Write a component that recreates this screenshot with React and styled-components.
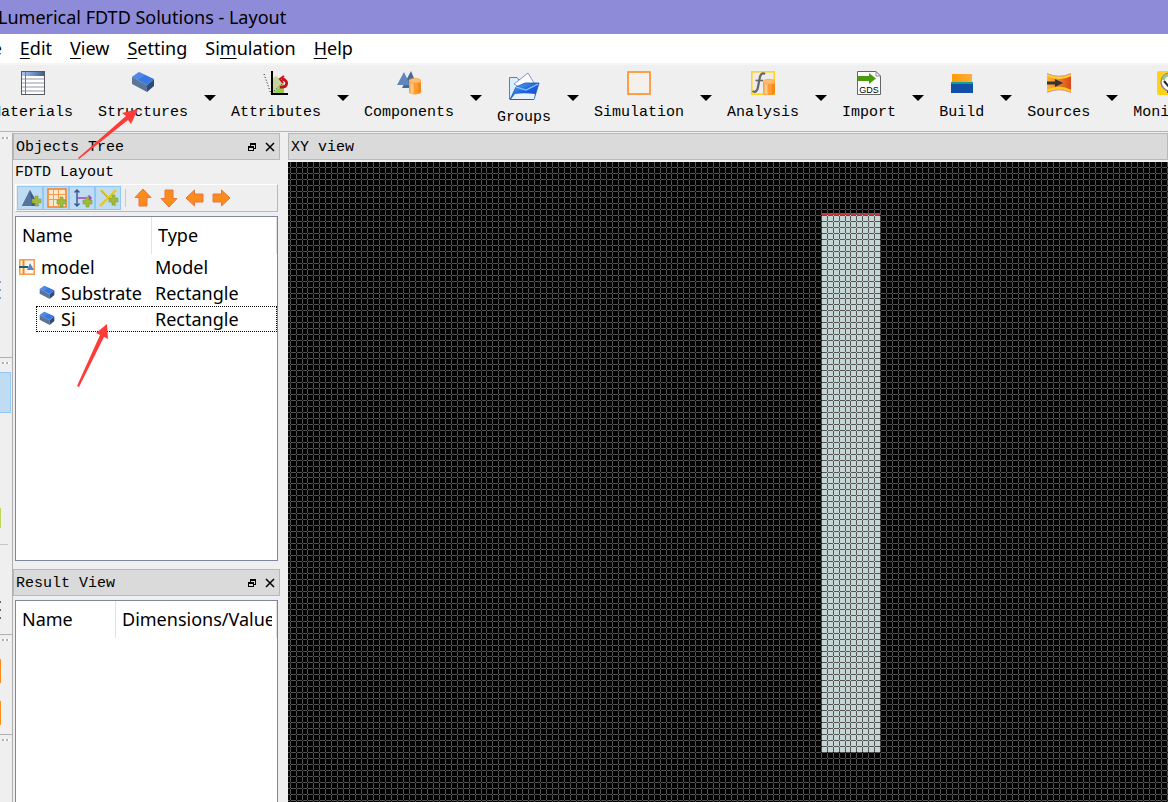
import React from 'react';
import styled, { createGlobalStyle } from 'styled-components';

const GRID_STEP = 5.967;

const gridPath = () => {
  const parts = [];
  for (let i = 0; i < 460; i += 1) {
    parts.push(`M${Math.round(1.58 + i * GRID_STEP)} 0v1600h1v-1600z`);
  }
  for (let i = 0; i < 270; i += 1) {
    parts.push(`M0 ${Math.round(5.2 + i * GRID_STEP)}h2740v1h-2740z`);
  }
  return parts.join('');
};

const GRID = gridPath();

/* icons */

const MaterialsIcon = () => (
  <svg width='24' height='24' viewBox='0 0 24 24' shapeRendering='crispEdges'>
    <defs>
      <linearGradient id='matHead'>
        <stop offset='0' stopColor='#a9c4f5' />
        <stop offset='1' stopColor='#3f5f92' />
      </linearGradient>
    </defs>
    <rect x='0.5' y='0.5' width='23' height='23' fill='#fff' stroke='#575860' />
    <rect x='1' y='1' width='22' height='4' fill='url(#matHead)' />
    <path d='M1 7h22v2H1zM1 11h22v2H1zM1 15h22v2H1zM1 19h22v2H1z' fill='#c8cbd0' />
    <path d='M4 1h1v22H4z' fill='#777b85' />
  </svg>
);

const BlockIcon = ({ size = 24 }) => (
  <svg width={size} height={size} viewBox='0 0 24 24'>
    <path d='M1 6L16 14V21L1 13z' fill='#5b7598' />
    <path d='M16 14L23 8V15L16 21z' fill='#2f4a75' />
    <path d='M1 6L8 1L23 8L16 14z' fill='#3977e2' />
    <path d='M1 6L8 1L14 4L7 9z' fill='#6b9bed' opacity='0.5' />
  </svg>
);

const AttributesIcon = () => (
  <svg width='26' height='24' viewBox='0 0 26 24'>
    <path d='M9 8L13 5L19 10L22 15L12 22H9z' fill='#c2d69b' />
    <path d='M11 22L21 12V22z' fill='#8fd14b' />
    <path d='M1 3L8 23M9 22L20 12' stroke='#111' strokeWidth='1' strokeDasharray='1 2' />
    <path d='M9 0V23H25' fill='none' stroke='#000' strokeWidth='2' />
    <path d='M19 8C26 9 25 17 17 16' fill='none' stroke='#c90e18' strokeWidth='2.8' />
    <path d='M21 5L17 8L20 12' fill='none' stroke='#c90e18' strokeWidth='2' />
  </svg>
);

const Cylinder = ({ x, y }) => (
  <g transform={`translate(${x} ${y})`}>
    <path d='M0 2.5V14C0 17.3 12 17.3 12 14V2.5z' fill='#ff9c32' />
    <path d='M1.5 4V15L4.5 16V5z' fill='#ffc98a' />
    <path d='M9 5H12V14L9 15.7z' fill='#f58a1a' />
    <ellipse cx='6' cy='2.7' rx='6' ry='2.4' fill='#ffbb70' stroke='#f39a3d' strokeWidth='0.6' />
  </g>
);

const ComponentsIcon = () => (
  <svg width='24' height='24' viewBox='0 0 24 24'>
    <path d='M14 0L21 17H5z' fill='#486a9a' />
    <path d='M7 1L13 14H0z' fill='#5f86bd' />
    <Cylinder x={12} y={7} />
  </svg>
);

const GroupsIcon = () => (
  <svg width='32' height='29' viewBox='0 0 32 29'>
    <defs>
      <linearGradient id='folder' x1='0' y1='0' x2='1' y2='1'>
        <stop offset='0' stopColor='#6fb6f2' />
        <stop offset='0.5' stopColor='#1f63dc' />
        <stop offset='1' stopColor='#1546b8' />
      </linearGradient>
    </defs>
    <path d='M1.5 6.5H9L11 9H23V28H1.5z' fill='#d9f1ff' stroke='#3b86d8' />
    <path d='M6 13L20 2L26 12L18 20z' fill='#fbfcff' stroke='#707cb5' strokeWidth='0.8' />
    <path d='M8 16L17 12H31L26 28.5H2z' fill='url(#folder)' stroke='#1853c0' strokeWidth='0.8' />
    <path d='M7 23C13 22 20 22 27 23L26 28H3z' fill='#e9f2ff' />
    <path d='M8 16L18 19L30 13' fill='none' stroke='#8cc9ff' strokeWidth='1.2' />
  </svg>
);

const SimulationIcon = () => (
  <svg width='24' height='24' viewBox='0 0 24 24'>
    <rect x='1' y='1' width='22' height='22' fill='#f4f0ec' stroke='#ff8d20' strokeWidth='1.6' />
  </svg>
);

const AnalysisIcon = () => (
  <svg width='24' height='24' viewBox='0 0 24 24'>
    <rect x='0.8' y='0.8' width='22.4' height='22.4' fill='#ececec' stroke='#ffd51c' strokeWidth='1.6' />
    <path d='M14 3C11 1 9 4 8.5 8L7 16C6.5 20 4 22 1.5 20' fill='none' stroke='#666' strokeWidth='2.2' />
    <path d='M4.5 9.5H12' stroke='#666' strokeWidth='1.6' />
    <Cylinder x={12} y={8} />
  </svg>
);

const ImportIcon = () => (
  <svg width='24' height='24' viewBox='0 0 24 24'>
    <path d='M0.5 0.5H19L23.5 5V23.5H0.5z' fill='#fff' stroke='#666' />
    <path d='M19 0.5V5H23.5' fill='none' stroke='#888' />
    <path d='M1 5H12V2L19 7.5L12 13V10H1z' fill='#4a9a0c' />
    <text x='12' y='22' textAnchor='middle' fontFamily='Liberation Sans, sans-serif' fontSize='9' fill='#000'>GDS</text>
  </svg>
);

const BuildIcon = () => (
  <svg width='24' height='24' viewBox='0 0 24 24' shapeRendering='crispEdges'>
    <defs>
      <linearGradient id='sun'>
        <stop offset='0' stopColor='#ff9c06' />
        <stop offset='1' stopColor='#ffac3c' />
      </linearGradient>
    </defs>
    <path d='M2 3H22V11H2z' fill='url(#sun)' />
    <path d='M1 11H23V13H1z' fill='#12a08c' />
    <path d='M1 13H23V22H1z' fill='#1250a5' />
  </svg>
);

const SourcesIcon = () => (
  <svg width='24' height='24' viewBox='0 0 24 24'>
    <defs>
      <linearGradient id='beam'>
        <stop offset='0' stopColor='#ffb23a' />
        <stop offset='1' stopColor='#d8481b' />
      </linearGradient>
    </defs>
    <path d='M0 3Q12 9 24 3V21Q12 15 0 21z' fill='url(#beam)' />
    <path d='M0 4Q12 10 24 4M0 20Q12 14 24 20' fill='none' stroke='#ffd11c' strokeWidth='2.4' />
    <path d='M0 2.5Q12 8 24 2.5M0 21.5Q12 16 24 21.5' fill='none' stroke='#dd7777' strokeWidth='0.8' />
    <path d='M0 10.500H8V8L16 12L8 16V13.5H0z' fill='#333' />
  </svg>
);

const MonitorsIcon = () => (
  <svg width='24' height='24' viewBox='0 0 24 24'>
    <rect width='24' height='24' rx='2' fill='#ffd21a' />
    <circle cx='13' cy='11' r='9' fill='#fff' stroke='#8a7ba8' strokeWidth='1.4' />
    <path d='M6 9Q8 3 14 4' fill='none' stroke='#9ac77f' strokeWidth='3' />
    <path d='M7 10L12 16' stroke='#222' strokeWidth='2' />
    <path d='M10 21H14' stroke='#555' strokeWidth='2' />
  </svg>
);

const CaretIcon = () => (
  <svg width='12' height='6' viewBox='0 0 12 6'>
    <path d='M0 0H12L6 6z' fill='#000' />
  </svg>
);

const Plus = () => (
  <path d='M11 11H14V8H17V11H20V15H17V18H14V15H11z' fill='#9fba3c' stroke='#829f38' strokeWidth='0.6' />
);

const AddStructureIcon = () => (
  <svg width='21' height='20' viewBox='0 0 21 20'>
    <path d='M9 2L18 18H1z' fill='#3f5b86' />
    <path d='M9 2L11 18H1z' fill='#55749f' />
    <Plus />
  </svg>
);

const AddGridIcon = () => (
  <svg width='21' height='20' viewBox='0 0 21 20'>
    <rect x='1' y='1' width='18' height='18' fill='#fde9cf' stroke='#f7862a' strokeWidth='1.6' />
    <path d='M6.5 1V19M11.5 1V19M1 6.5H19M1 11.5H19' stroke='#f9994a' />
    <g transform='translate(-1 1)'><Plus /></g>
  </svg>
);

const AddAxisIcon = () => (
  <svg width='21' height='20' viewBox='0 0 21 20'>
    <path d='M4 2V18M1.500 4.5L4 2L6.5 4.5M1.5 15.5L4 18L6.5 15.5' fill='none' stroke='#3c5a92' strokeWidth='1.5' />
    <path d='M4 10H18M15.5 7.5L18 10L15.5 12.5' fill='none' stroke='#a63bd0' strokeWidth='1.5' />
    <g transform='translate(-1 1)'><Plus /></g>
  </svg>
);

const AddCrossIcon = () => (
  <svg width='21' height='20' viewBox='0 0 21 20'>
    <path d='M2 2L17 18M17 2L1 18' stroke='#e8c81c' strokeWidth='2.2' />
    <path d='M2 3L8 9' stroke='#b9962c' strokeWidth='0.8' />
    <g transform='translate(-1 -1)'><Plus /></g>
  </svg>
);

const ArrowIcon = ({ turn }) => (
  <svg width='20' height='20' viewBox='0 0 20 20'>
    <path
      d='M10 1L18 9.5H14V18H6V9.5H2z'
      fill='#f98c1d'
      stroke='#ee7440'
      strokeLinejoin='round'
      transform={`rotate(${turn} 10 10)`}
    />
  </svg>
);

const ModelIcon = () => (
  <svg width='16' height='16' viewBox='0 0 16 16'>
    <rect x='0.8' y='0.8' width='14.4' height='14.4' fill='#fff8ef' stroke='#f79a4d' strokeWidth='1.5' />
    <path d='M4.5 1V15' stroke='#ff8410' strokeWidth='2' />
    <path d='M0 8H9' stroke='#17607c' strokeWidth='2' />
    <path d='M11 4L15 11H8z' fill='#5d83bd' />
  </svg>
);

const FloatIcon = () => (
  <svg width='10' height='10' viewBox='0 0 10 10' shapeRendering='crispEdges'>
    <path d='M3 1h6v6H7V6h1V3H4v1H3zM1 4h6v5H1zM2 6v2h4V6z' fill='#000' fillRule='evenodd' />
  </svg>
);

const CloseIcon = () => (
  <svg width='10' height='10' viewBox='0 0 10 10'>
    <path d='M1 1L9 9M9 1L1 9' stroke='#000' strokeWidth='1.5' />
  </svg>
);

/* data */

const menus = [
  ['Fil', 'e', ''],
  ['', 'E', 'dit'],
  ['', 'V', 'iew'],
  ['', 'S', 'etting'],
  ['Si', 'm', 'ulation'],
  ['', 'H', 'elp'],
];

const tools = [
  { label: 'Structures', Icon: BlockIcon },
  { label: 'Attributes', Icon: AttributesIcon },
  { label: 'Components', Icon: ComponentsIcon },
  { label: 'Groups', Icon: GroupsIcon },
  { label: 'Simulation', Icon: SimulationIcon },
  { label: 'Analysis', Icon: AnalysisIcon },
  { label: 'Import', Icon: ImportIcon },
  { label: 'Build', Icon: BuildIcon },
  { label: 'Sources', Icon: SourcesIcon },
  { label: 'Monitors', Icon: MonitorsIcon },
];

const addTools = [
  { name: 'Add structure', Icon: AddStructureIcon },
  { name: 'Add simulation', Icon: AddGridIcon },
  { name: 'Add source', Icon: AddAxisIcon },
  { name: 'Add monitor', Icon: AddCrossIcon },
];

const moveTools = [
  { name: 'Move up', turn: 0 },
  { name: 'Move down', turn: 180 },
  { name: 'Move left', turn: 270 },
  { name: 'Move right', turn: 90 },
];

const objects = [
  { name: 'Substrate', type: 'Rectangle' },
  { name: 'Si', type: 'Rectangle', focused: true },
];

const DockHeader = ({ title }) => (
  <PanelHeader>
    <PanelTitle>{title}</PanelTitle>
    <PanelButton aria-label={`Float ${title}`}><FloatIcon /></PanelButton>
    <PanelButton aria-label={`Close ${title}`}><CloseIcon /></PanelButton>
  </PanelHeader>
);

const App = () => (
  <Window>
    <GlobalStyle />
    <TitleBar>Lumerical FDTD Solutions - Layout</TitleBar>
    <MenuBar>
      {menus.map(([before, key, after]) => (
        <MenuButton key={before + key + after}>
          {before}{before === 'Fil' ? key : <u>{key}</u>}{after}
        </MenuButton>
      ))}
    </MenuBar>
    <Toolbar>
      <ToolButton $first><MaterialsIcon />Materials</ToolButton>
      {tools.map(({ label, Icon }) => (
        <Tool key={label}>
          <ToolButton><Icon />{label}</ToolButton>
          <CaretButton aria-label={`${label} menu`}><CaretIcon /></CaretButton>
        </Tool>
      ))}
    </Toolbar>
    <Workspace>
      <SideTools>
        <SideGroup $size={225}>
          <Grip />
          <SideMark $top={142} $height={20} $color='#7fa3d6' $dotted />
        </SideGroup>
        <SideGroup $size={277}>
          <Grip />
          <SideToggle aria-label='Select mode' />
          <SideMark $top={95} $height={20} $color='#bcd657' />
          <SideRule />
          <SideMark $top={56} $height={20} $color='#666' $dotted />
        </SideGroup>
        <SideGroup $size={100}>
          <Grip />
          <SideMark $top={18} $height={24} $color='#ff8d20' />
          <SideMark $top={18} $height={24} $color='#ff8d20' />
        </SideGroup>
        <SideGroup>
          <Grip />
        </SideGroup>
      </SideTools>
      <Docks>
        <DockHeader title='Objects Tree' />
        <DockBody $size={401}>
          <Caption>FDTD Layout</Caption>
          <TreeTools>
            {addTools.map(({ name, Icon }) => (
              <TreeButton key={name} aria-label={name} $active><Icon /></TreeButton>
            ))}
            <TreeDivider />
            {moveTools.map(({ name, turn }) => (
              <TreeButton key={name} aria-label={name}><ArrowIcon turn={turn} /></TreeButton>
            ))}
          </TreeTools>
          <ListBox>
            <Table>
              <colgroup><NameCol $width={136} /><col /></colgroup>
              <thead>
                <tr>
                  <HeadCell><HeadText>Name</HeadText></HeadCell>
                  <HeadCell><HeadText>Type</HeadText></HeadCell>
                </tr>
              </thead>
              <tbody>
                <tr>
                  <Cell><ItemName><ModelIcon />model</ItemName></Cell>
                  <Cell><ItemType>Model</ItemType></Cell>
                </tr>
                {objects.map(({ name, type, focused }) => (
                  <tr key={name}>
                    <Cell>
                      <ItemName $nested $focused={focused}><BlockIcon size={16} />{name}</ItemName>
                    </Cell>
                    <Cell><ItemType $focused={focused}>{type}</ItemType></Cell>
                  </tr>
                ))}
              </tbody>
            </Table>
          </ListBox>
        </DockBody>
        <DockHeader title='Result View' />
        <DockBody>
          <ListBox $open>
            <Table>
              <colgroup><NameCol $width={100} /><col /></colgroup>
              <thead>
                <tr>
                  <HeadCell><HeadText>Name</HeadText></HeadCell>
                  <HeadCell><HeadText>Dimensions/Value</HeadText></HeadCell>
                </tr>
              </thead>
            </Table>
          </ListBox>
        </DockBody>
      </Docks>
      <View>
        <PanelHeader><PanelTitle>XY view</PanelTitle></PanelHeader>
        <Canvas shapeRendering='crispEdges' role='img' aria-label='XY view'>
          <rect width='100%' height='100%' fill='#000' />
          <rect x='534' y='51' width='58' height='2' fill='#c43a3e' />
          <rect x='534' y='53' width='58' height='537' fill='#c5d5d4' />
          <path d={GRID} fill='#535353' />
        </Canvas>
      </View>
    </Workspace>
    <Pointer $left={76} $top={108} width='64' height='52' viewBox='0 0 64 52'>
      <path d='M2 50L50 8L46 5L62 1L55 16L52 12L3 51z' fill='#ff3b38' />
    </Pointer>
    <Pointer $left={76} $top={322} width='34' height='66' viewBox='0 0 34 66'>
      <path d='M1 64L24 13L20 11L31 2L32 17L28 15L3 65z' fill='#ff3b38' />
    </Pointer>
  </Window>
);

const uiFont = '"Noto Sans", "Open Sans", sans-serif';
const monoFont = '"Liberation Mono", "Courier New", monospace';

const GlobalStyle = createGlobalStyle`
  * {
    box-sizing: border-box;
  }
  body {
    margin: 0;
    background: #efefef;
    color: #000;
    overflow: hidden;
  }
  button {
    border: 0;
    padding: 0;
    background: none;
    color: inherit;
    font: inherit;
  }
  svg {
    display: block;
    flex: none;
  }
`;

const Window = styled.div`
  position: relative;
  display: flex;
  flex-direction: column;
  height: 100vh;
  overflow: hidden;
`;

const TitleBar = styled.header`
  margin-left: -2px;
  background: #8e8bd8;
  font: 18px/34px ${uiFont};
  white-space: nowrap;
`;

const MenuBar = styled.nav`
  display: flex;
  gap: 18px;
  padding-bottom: 1px;
  background: #fff;
  font: 18px/28px ${uiFont};
`;

const MenuButton = styled.button`
  flex: none;
  u {
    text-underline-offset: 3px;
    text-decoration-thickness: 1px;
  }
  &:first-child {
    margin-left: -27px;
  }
`;

const Toolbar = styled.div`
  display: flex;
  height: 69px;
  padding-top: 6px;
  border-top: 2px solid #f5f5f5;
  border-bottom: 1px solid #b5b5b5;
  font: 15px/18px ${monoFont};
  overflow: hidden;
`;

const Tool = styled.div`
  display: flex;
  flex: none;
`;

const ToolButton = styled.button`
  display: flex;
  flex: none;
  flex-direction: column;
  align-items: center;
  align-self: flex-start;
  gap: 9px;
  margin-left: ${props => (props.$first ? '-8px' : '0')};
  margin-right: ${props => (props.$first ? '25px' : '0')};
`;

const CaretButton = styled.button`
  display: flex;
  align-items: center;
  align-self: flex-start;
  justify-content: center;
  width: 43px;
  height: 54px;
`;

const Workspace = styled.main`
  display: flex;
  flex: 1;
  min-height: 0;
  padding-top: 1px;
`;

const SideTools = styled.aside`
  flex: none;
  width: 13px;
  border-right: 1px solid #b0b0b0;
  overflow: hidden;
`;

const SideGroup = styled.div`
  height: ${props => (props.$size ? `${props.$size}px` : 'auto')};
  border-bottom: ${props => (props.$size ? '1px solid #b0b0b0' : '0')};
  overflow: hidden;
`;

const Grip = styled.div`
  width: 8px;
  height: 2px;
  margin: 4px 0 8px 2px;
  background: repeating-linear-gradient(90deg, #b0b0b0 0 2px, #fff 2px 4px);
`;

const SideMark = styled.div`
  width: 1px;
  height: ${props => props.$height}px;
  margin-top: ${props => props.$top}px;
  background: ${props => (props.$dotted
    ? `repeating-linear-gradient(${props.$color} 0 2px, transparent 2px 8px)`
    : props.$color)};
`;

const SideToggle = styled.button`
  display: block;
  width: 11px;
  height: 41px;
  background: #bfdcf3;
  border: solid #8fc8f6;
  border-width: 1px 1px 1px 0;
`;

const SideRule = styled.hr`
  width: 8px;
  height: 1px;
  margin: 16px 0 0;
  border: 0;
  background: #c8c8c8;
`;

const Docks = styled.section`
  display: flex;
  flex: none;
  flex-direction: column;
  width: 267px;
  margin-right: 8px;
`;

const PanelHeader = styled.div`
  display: flex;
  flex: none;
  align-items: center;
  gap: 8px;
  height: 27px;
  padding: 0 4px 0 2px;
  background: #dadada;
  border: 1px solid #b8b8b8;
`;

const PanelTitle = styled.h2`
  flex: 1;
  margin: 0;
  padding-top: 2px;
  font: 15px/22px ${monoFont};
`;

const PanelButton = styled.button`
  flex: none;
`;

const DockBody = styled.div`
  display: flex;
  flex: ${props => (props.$size ? 'none' : '1')};
  flex-direction: column;
  height: ${props => (props.$size ? `${props.$size}px` : 'auto')};
  margin-bottom: ${props => (props.$size ? '8px' : '0')};
  padding: 0 2px;
`;

const Caption = styled.div`
  padding-top: 2px;
  font: 15px/22px ${monoFont};
`;

const TreeTools = styled.div`
  display: flex;
  align-items: center;
  height: 28px;
  padding-left: 1px;
  border: 1px solid #b8b8b8;
  border-color: #fff #b8b8b8 #b8b8b8 #fff;
`;

const TreeButton = styled.button`
  display: flex;
  align-items: center;
  justify-content: center;
  width: 26px;
  height: 24px;
  padding-left: ${props => (props.$active ? '2px' : '0')};
  background: ${props => (props.$active ? '#bfdcf3' : 'none')};
  border: ${props => (props.$active ? '1px solid #8fc8f6' : '0')};
`;

const TreeDivider = styled.span`
  width: 1px;
  height: 18px;
  margin: 0 4px;
  background: #c8c8c8;
`;

const ListBox = styled.div`
  flex: 1;
  min-height: 0;
  margin-top: 4px;
  background: #fff;
  border: 1px solid #82869a;
  border-bottom-width: ${props => (props.$open ? '0' : '1px')};
  overflow: hidden;
`;

const Table = styled.table`
  width: 100%;
  border-spacing: 0;
  table-layout: fixed;
  font: 18px/26px ${uiFont};
`;

const NameCol = styled.col`
  width: ${props => props.$width}px;
`;

const HeadCell = styled.th`
  height: 37px;
  padding: 0 4px 2px 6px;
  border-right: 1px solid #e2e2e2;
  font-weight: 400;
  text-align: left;
`;

const HeadText = styled.div`
  white-space: nowrap;
  overflow: hidden;
`;

const Cell = styled.td`
  padding: 0;
  white-space: nowrap;
`;

const ItemName = styled.div`
  display: flex;
  align-items: center;
  gap: 6px;
  height: 26px;
  margin-left: ${props => (props.$nested ? '20px' : '0')};
  padding-left: 2px;
  border: 1px dotted ${props => (props.$focused ? '#000' : 'transparent')};
  border-right: 0;
`;

const ItemType = styled.div`
  height: 26px;
  padding-left: 3px;
  border: 1px dotted ${props => (props.$focused ? '#000' : 'transparent')};
  border-left: 0;
  line-height: 24px;
`;

const View = styled.section`
  display: flex;
  flex: 1;
  flex-direction: column;
  gap: 2px;
  min-width: 0;
`;

const Canvas = styled.svg`
  flex: 1;
  width: 100%;
  min-height: 0;
`;

const Pointer = styled.svg`
  position: absolute;
  left: ${props => props.$left}px;
  top: ${props => props.$top}px;
  pointer-events: none;
`;

export default App;
